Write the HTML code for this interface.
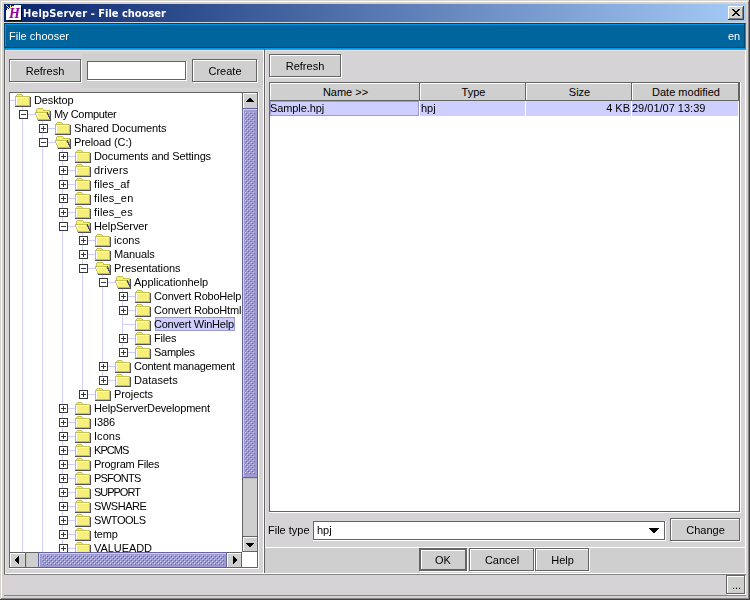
<!DOCTYPE html>
<html><head><meta charset="utf-8"><title>HelpServer - File chooser</title>
<style>
*{margin:0;padding:0;box-sizing:border-box}
html,body{width:750px;height:600px;overflow:hidden;background:#d6d3ce}
body{position:relative;font-family:"Liberation Sans",Arial,sans-serif;font-size:11px;color:#000;line-height:14px;letter-spacing:0}
.a,i,span,svg{position:absolute;display:block}
span,.btn b,.th b{will-change:transform}
/* window frame */
#f1{left:0;top:0;width:750px;height:600px;background:#424142}
#f2{left:0;top:0;width:749px;height:599px;background:#d6d3ce}
#f3{left:1px;top:1px;width:748px;height:598px;background:#848284}
#f4{left:1px;top:1px;width:747px;height:597px;background:#fff}
#f5{left:2px;top:2px;width:746px;height:596px;background:#d6d3ce}
#title{left:4px;top:4px;width:742px;height:18px;background:linear-gradient(90deg,#08246b 0%,#a5cbf7 100%)}
#ttext{left:19px;top:1px;height:18px;line-height:18px;letter-spacing:0;font-family:"DejaVu Sans Condensed","DejaVu Sans",sans-serif;font-weight:bold;font-size:11px;color:#fff;white-space:nowrap}
#close{left:724px;top:2px;width:16px;height:14px;background:#d6d3ce;box-shadow:inset -1px -1px 0 #424142,inset 1px 1px 0 #fff,inset -2px -2px 0 #848284}
/* header */
#hdr{left:4px;top:23px;width:742px;height:26px;background:#00659c}
#hdr:before{content:"";position:absolute;left:1px;top:1px;right:0;bottom:0;border:1px solid #0096e7}
#hdr:after{content:"";position:absolute;left:0;top:0;right:1px;bottom:1px;border:1px solid #00456b}
#hdr span{color:#fff;top:6px;white-space:nowrap}
/* content */
#content{left:4px;top:49px;width:742px;height:547px;background:#d6d3d6}
.btn{background:#cecfce;text-align:center;white-space:nowrap}
.btn:before{content:"";position:absolute;left:1px;top:1px;right:0;bottom:0;border:1px solid #fff}
.btn:after{content:"";position:absolute;left:0;top:0;right:1px;bottom:1px;border:1px solid #636563}
.btn b{font-weight:normal;position:relative;z-index:2}
.fld{background:#fff}
.fld:before{content:"";position:absolute;left:1px;top:1px;right:0;bottom:0;border:1px solid #fff}
.fld:after{content:"";position:absolute;left:0;top:0;right:1px;bottom:1px;border:1px solid #636563}
.hl{height:1px;background:#cecfff}
.vl{width:1px;background:#cecfff}
.bx{width:9px;height:9px;border:1px solid #393839;background:#fff}
.bx:before{content:"";position:absolute;left:1px;top:3px;width:5px;height:1px;background:#393839}
.bp:after{content:"";position:absolute;left:3px;top:1px;width:1px;height:5px;background:#393839}
.tl{height:14px;line-height:14px;white-space:nowrap}
.sel{background:#cecfff;border:1px solid #9c9ace}
svg{shape-rendering:crispEdges}
#tree{left:10px;top:93px;width:232px;height:459px;background:#fff;overflow:hidden}
.dk{background:#636563}
.wh{background:#fff}
.fc{background:#cecfce}
.th{top:83px;height:17px;line-height:18px;text-align:center;padding-left:2px;border-right:1px solid #636563;box-shadow:inset 1px 1px 0 #fff}
.th b{font-weight:normal}
.sb{box-shadow:inset 1px 1px 0 #fff}
</style></head><body>
<svg width="0" height="0" style="position:absolute">
<defs>
<pattern id="bump" width="4" height="4" patternUnits="userSpaceOnUse">
<rect x="0" y="0" width="1" height="1" fill="#cecfff"/><rect x="2" y="2" width="1" height="1" fill="#cecfff"/>
<rect x="1" y="1" width="1" height="1" fill="#63659c"/><rect x="3" y="3" width="1" height="1" fill="#63659c"/>
</pattern>
<symbol id="fc" viewBox="0 0 16 13">
<rect x="2" y="0" width="5" height="1" fill="#c6c34a"/>
<rect x="1" y="1" width="7" height="1" fill="#c6c34a"/>
<rect x="2" y="1" width="5" height="1" fill="#f7ef7b"/>
<rect x="0" y="2" width="15" height="10" fill="#c6c34a"/>
<rect x="1" y="3" width="13" height="8" fill="#fff"/>
<rect x="2" y="4" width="12" height="7" fill="#f7ef7b"/>
<rect x="15" y="3" width="1" height="10" fill="#52515a"/>
<rect x="0" y="12" width="16" height="1" fill="#52515a"/>
</symbol>
<symbol id="fo" viewBox="0 0 16 13">
<rect x="2" y="0" width="6" height="1" fill="#c6c34a"/>
<rect x="1" y="1" width="8" height="3" fill="#c6c34a"/>
<rect x="2" y="1" width="6" height="3" fill="#f7ef7b"/>
<rect x="8" y="2" width="7" height="10" fill="#c6c34a"/>
<rect x="2" y="3" width="12" height="2" fill="#f7ef7b"/>
<rect x="0" y="4" width="12" height="3" fill="#c6c34a"/>
<rect x="1" y="5" width="10" height="1" fill="#fff"/>
<rect x="1" y="6" width="1" height="1" fill="#fff"/>
<rect x="2" y="6" width="10" height="1" fill="#f7ef7b"/>
<rect x="1" y="7" width="13" height="2" fill="#c6c34a"/>
<rect x="2" y="7" width="1" height="2" fill="#fff"/>
<rect x="3" y="7" width="10" height="2" fill="#f7ef7b"/>
<rect x="2" y="9" width="13" height="3" fill="#c6c34a"/>
<rect x="3" y="9" width="1" height="1" fill="#fff"/>
<rect x="4" y="9" width="10" height="2" fill="#f7ef7b"/>
<rect x="3" y="10" width="1" height="1" fill="#f7ef7b"/>
<rect x="12" y="4" width="1" height="3" fill="#52516b"/>
<rect x="13" y="6" width="1" height="3" fill="#52516b"/>
<rect x="14" y="8" width="1" height="3" fill="#52516b"/>
<rect x="15" y="3" width="1" height="10" fill="#52515a"/>
<rect x="3" y="12" width="13" height="1" fill="#52515a"/>
</symbol>
</defs></svg>

<div class="a" id="f1"></div><div class="a" id="f2"></div><div class="a" id="f3"></div><div class="a" id="f4"></div><div class="a" id="f5"></div>
<div class="a" id="title">
  <div class="a" style="left:2px;top:1px;width:15px;height:15px;background:#fff"></div>
  <div class="a" style="left:17px;top:3px;width:1px;height:14px;background:#000"></div>
  <div class="a" style="left:4px;top:16px;width:13px;height:1px;background:#000"></div>
  <svg style="left:2px;top:1px" width="15" height="15"><path d="M0 0h8v1h-2v1h-2v1h-1v1h-2v1h-1z" fill="#08246b"/><path d="M0 0h1v1h-1zM1 1h1v1h-1zM2 2h1v1h-1zM3 3h1v1h-1zM4 4h1v1h-1zM5 6h1v1h-1zM4 0h1v3h-1zM7 1h1v1h-1zM6 2h1v1h-1zM5 3h1v1h-1zM1 3h1v1h-1zM3 5h1v1h-1z" fill="#ffff00"/></svg>
  <span style="left:5px;top:2px;width:14px;height:15px;line-height:15px;font-family:'Liberation Serif',serif;font-style:italic;font-weight:bold;font-size:14px;color:#9c009c;letter-spacing:0">H</span>
  <span id="ttext"><b style="letter-spacing:0.2px">HelpServer</b> - File chooser</span>
  <div class="a" id="close"><svg width="16" height="14" style="left:0;top:0"><path d="M4 3h2v1h-2zM10 3h2v1h-2zM5 4h2v1h-2zM9 4h2v1h-2zM6 5h4v1h-4zM7 6h2v1h-2zM6 7h4v1h-4zM5 8h2v1h-2zM9 8h2v1h-2zM4 9h2v1h-2zM10 9h2v1h-2z" fill="#000"/></svg></div>
</div>
<div class="a" id="hdr"><span style="left:5px">File chooser</span><span style="right:6px">en</span></div>
<div class="a" id="content"></div>

<!-- panel borders -->
<div class="a" style="left:4px;top:49px;width:742px;height:1px;background:#848284"></div>
<div class="a" style="left:5px;top:50px;width:740px;height:1px;background:#e7e3e7"></div>
<div class="a" style="left:4px;top:49px;width:1px;height:526px;background:#636563"></div>
<div class="a" style="left:5px;top:50px;width:1px;height:523px;background:#e7e3e7"></div>
<div class="a wh" style="left:263px;top:50px;width:1px;height:524px"></div>
<div class="a dk" style="left:264px;top:49px;width:1px;height:526px"></div>
<div class="a" style="left:265px;top:50px;width:1px;height:523px;background:#e7e3e7"></div>
<div class="a wh" style="left:745px;top:50px;width:1px;height:545px"></div>

<!-- left toolbar -->
<div class="a fc" style="left:82px;top:54px;width:181px;height:34px"></div>
<div class="a btn" style="left:9px;top:59px;width:73px;height:24px;line-height:25px"><b style="left:-0.5px">Refresh</b></div>
<div class="a fld" style="left:87px;top:61px;width:100px;height:20px"></div>
<div class="a btn" style="left:192px;top:59px;width:66px;height:24px;line-height:25px"><b>Create</b></div>

<!-- tree scrollpane -->
<div class="a fld" style="left:9px;top:92px;width:250px;height:477px"></div>
<div class="a" id="tree">
<i class="hl" style="left:0;top:7px;width:5px"></i>
<i class="vl" style="left:12px;top:14px;height:457px"></i>
<i class="hl" style="left:18px;top:21px;width:7px"></i>
<i class="vl" style="left:32px;top:28px;height:443px"></i>
<i class="hl" style="left:38px;top:35px;width:7px"></i>
<i class="hl" style="left:38px;top:49px;width:7px"></i>
<i class="vl" style="left:52px;top:56px;height:415px"></i>
<i class="hl" style="left:58px;top:63px;width:7px"></i>
<i class="hl" style="left:58px;top:77px;width:7px"></i>
<i class="hl" style="left:58px;top:91px;width:7px"></i>
<i class="hl" style="left:58px;top:105px;width:7px"></i>
<i class="hl" style="left:58px;top:119px;width:7px"></i>
<i class="hl" style="left:58px;top:133px;width:7px"></i>
<i class="vl" style="left:72px;top:140px;height:162px"></i>
<i class="hl" style="left:78px;top:147px;width:7px"></i>
<i class="hl" style="left:78px;top:161px;width:7px"></i>
<i class="hl" style="left:78px;top:175px;width:7px"></i>
<i class="vl" style="left:92px;top:182px;height:106px"></i>
<i class="hl" style="left:98px;top:189px;width:7px"></i>
<i class="vl" style="left:112px;top:196px;height:64px"></i>
<i class="hl" style="left:118px;top:203px;width:7px"></i>
<i class="hl" style="left:118px;top:217px;width:7px"></i>
<i class="hl" style="left:113px;top:231px;width:12px"></i>
<i class="hl" style="left:118px;top:245px;width:7px"></i>
<i class="hl" style="left:118px;top:259px;width:7px"></i>
<i class="hl" style="left:98px;top:273px;width:7px"></i>
<i class="hl" style="left:98px;top:287px;width:7px"></i>
<i class="hl" style="left:78px;top:301px;width:7px"></i>
<i class="hl" style="left:58px;top:315px;width:7px"></i>
<i class="hl" style="left:58px;top:329px;width:7px"></i>
<i class="hl" style="left:58px;top:343px;width:7px"></i>
<i class="hl" style="left:58px;top:357px;width:7px"></i>
<i class="hl" style="left:58px;top:371px;width:7px"></i>
<i class="hl" style="left:58px;top:385px;width:7px"></i>
<i class="hl" style="left:58px;top:399px;width:7px"></i>
<i class="hl" style="left:58px;top:413px;width:7px"></i>
<i class="hl" style="left:58px;top:427px;width:7px"></i>
<i class="hl" style="left:58px;top:441px;width:7px"></i>
<i class="hl" style="left:58px;top:455px;width:7px"></i>
<svg class="ic" style="left:5px;top:1px" width="16" height="13"><use href="#fc"/></svg>
<span class="tl" style="left:24.3px;top:0px;letter-spacing:-0.12px">Desktop</span>
<i class="bx bm" style="left:9px;top:17px"></i>
<svg class="ic" style="left:25px;top:15px" width="16" height="13"><use href="#fo"/></svg>
<span class="tl" style="left:44.3px;top:14px;letter-spacing:-0.33px">My Computer</span>
<i class="bx bp" style="left:29px;top:31px"></i>
<svg class="ic" style="left:45px;top:29px" width="16" height="13"><use href="#fc"/></svg>
<span class="tl" style="left:64.3px;top:28px;letter-spacing:-0.11px">Shared Documents</span>
<i class="bx bm" style="left:29px;top:45px"></i>
<svg class="ic" style="left:45px;top:43px" width="16" height="13"><use href="#fo"/></svg>
<span class="tl" style="left:64.3px;top:42px;letter-spacing:-0.12px">Preload (C:)</span>
<i class="bx bp" style="left:49px;top:59px"></i>
<svg class="ic" style="left:65px;top:57px" width="16" height="13"><use href="#fc"/></svg>
<span class="tl" style="left:84.3px;top:56px;letter-spacing:-0.13px">Documents and Settings</span>
<i class="bx bp" style="left:49px;top:73px"></i>
<svg class="ic" style="left:65px;top:71px" width="16" height="13"><use href="#fc"/></svg>
<span class="tl" style="left:84.3px;top:70px;letter-spacing:0.22px">drivers</span>
<i class="bx bp" style="left:49px;top:87px"></i>
<svg class="ic" style="left:65px;top:85px" width="16" height="13"><use href="#fc"/></svg>
<span class="tl" style="left:84.3px;top:84px;letter-spacing:0.10px">files_af</span>
<i class="bx bp" style="left:49px;top:101px"></i>
<svg class="ic" style="left:65px;top:99px" width="16" height="13"><use href="#fc"/></svg>
<span class="tl" style="left:84.3px;top:98px;letter-spacing:0.19px">files_en</span>
<i class="bx bp" style="left:49px;top:115px"></i>
<svg class="ic" style="left:65px;top:113px" width="16" height="13"><use href="#fc"/></svg>
<span class="tl" style="left:84.3px;top:112px;letter-spacing:0.19px">files_es</span>
<i class="bx bm" style="left:49px;top:129px"></i>
<svg class="ic" style="left:65px;top:127px" width="16" height="13"><use href="#fo"/></svg>
<span class="tl" style="left:84.3px;top:126px;letter-spacing:-0.12px">HelpServer</span>
<i class="bx bp" style="left:69px;top:143px"></i>
<svg class="ic" style="left:85px;top:141px" width="16" height="13"><use href="#fc"/></svg>
<span class="tl" style="left:104.3px;top:140px;letter-spacing:0.10px">icons</span>
<i class="bx bp" style="left:69px;top:157px"></i>
<svg class="ic" style="left:85px;top:155px" width="16" height="13"><use href="#fc"/></svg>
<span class="tl" style="left:104.3px;top:154px;letter-spacing:-0.12px">Manuals</span>
<i class="bx bm" style="left:69px;top:171px"></i>
<svg class="ic" style="left:85px;top:169px" width="16" height="13"><use href="#fo"/></svg>
<span class="tl" style="left:104.3px;top:168px;letter-spacing:-0.06px">Presentations</span>
<i class="bx bm" style="left:89px;top:185px"></i>
<svg class="ic" style="left:105px;top:183px" width="16" height="13"><use href="#fo"/></svg>
<span class="tl" style="left:124.3px;top:182px;letter-spacing:-0.03px">Applicationhelp</span>
<i class="bx bp" style="left:109px;top:199px"></i>
<svg class="ic" style="left:125px;top:197px" width="16" height="13"><use href="#fc"/></svg>
<span class="tl" style="left:144.3px;top:196px;letter-spacing:-0.21px">Convert RoboHelp</span>
<i class="bx bp" style="left:109px;top:213px"></i>
<svg class="ic" style="left:125px;top:211px" width="16" height="13"><use href="#fc"/></svg>
<span class="tl" style="left:144.3px;top:210px;letter-spacing:-0.21px">Convert RoboHtml</span>
<svg class="ic" style="left:125px;top:225px" width="16" height="13"><use href="#fc"/></svg>
<i class="sel" style="left:145px;top:224px;width:80px;height:14px"></i>
<span class="tl" style="left:144.3px;top:224px;letter-spacing:-0.22px">Convert WinHelp</span>
<i class="bx bp" style="left:109px;top:241px"></i>
<svg class="ic" style="left:125px;top:239px" width="16" height="13"><use href="#fc"/></svg>
<span class="tl" style="left:144.3px;top:238px;letter-spacing:-0.17px">Files</span>
<i class="bx bp" style="left:109px;top:255px"></i>
<svg class="ic" style="left:125px;top:253px" width="16" height="13"><use href="#fc"/></svg>
<span class="tl" style="left:144.3px;top:252px;letter-spacing:-0.28px">Samples</span>
<i class="bx bp" style="left:89px;top:269px"></i>
<svg class="ic" style="left:105px;top:267px" width="16" height="13"><use href="#fc"/></svg>
<span class="tl" style="left:124.3px;top:266px;letter-spacing:-0.28px">Content management</span>
<i class="bx bp" style="left:89px;top:283px"></i>
<svg class="ic" style="left:105px;top:281px" width="16" height="13"><use href="#fc"/></svg>
<span class="tl" style="left:124.3px;top:280px;letter-spacing:0.04px">Datasets</span>
<i class="bx bp" style="left:69px;top:297px"></i>
<svg class="ic" style="left:85px;top:295px" width="16" height="13"><use href="#fc"/></svg>
<span class="tl" style="left:104.3px;top:294px;letter-spacing:-0.10px">Projects</span>
<i class="bx bp" style="left:49px;top:311px"></i>
<svg class="ic" style="left:65px;top:309px" width="16" height="13"><use href="#fc"/></svg>
<span class="tl" style="left:84.3px;top:308px;letter-spacing:-0.19px">HelpServerDevelopment</span>
<i class="bx bp" style="left:49px;top:325px"></i>
<svg class="ic" style="left:65px;top:323px" width="16" height="13"><use href="#fc"/></svg>
<span class="tl" style="left:84.3px;top:322px;letter-spacing:-0.07px">I386</span>
<i class="bx bp" style="left:49px;top:339px"></i>
<svg class="ic" style="left:65px;top:337px" width="16" height="13"><use href="#fc"/></svg>
<span class="tl" style="left:84.3px;top:336px;letter-spacing:0.05px">Icons</span>
<i class="bx bp" style="left:49px;top:353px"></i>
<svg class="ic" style="left:65px;top:351px" width="16" height="13"><use href="#fc"/></svg>
<span class="tl" style="left:84.3px;top:350px;letter-spacing:-0.95px">KPCMS</span>
<i class="bx bp" style="left:49px;top:367px"></i>
<svg class="ic" style="left:65px;top:365px" width="16" height="13"><use href="#fc"/></svg>
<span class="tl" style="left:84.3px;top:364px;letter-spacing:-0.25px">Program Files</span>
<i class="bx bp" style="left:49px;top:381px"></i>
<svg class="ic" style="left:65px;top:379px" width="16" height="13"><use href="#fc"/></svg>
<span class="tl" style="left:84.3px;top:378px;letter-spacing:-0.78px">PSFONTS</span>
<i class="bx bp" style="left:49px;top:395px"></i>
<svg class="ic" style="left:65px;top:393px" width="16" height="13"><use href="#fc"/></svg>
<span class="tl" style="left:84.3px;top:392px;letter-spacing:-1.02px">SUPPORT</span>
<i class="bx bp" style="left:49px;top:409px"></i>
<svg class="ic" style="left:65px;top:407px" width="16" height="13"><use href="#fc"/></svg>
<span class="tl" style="left:84.3px;top:406px;letter-spacing:-0.45px">SWSHARE</span>
<i class="bx bp" style="left:49px;top:423px"></i>
<svg class="ic" style="left:65px;top:421px" width="16" height="13"><use href="#fc"/></svg>
<span class="tl" style="left:84.3px;top:420px;letter-spacing:-0.45px">SWTOOLS</span>
<i class="bx bp" style="left:49px;top:437px"></i>
<svg class="ic" style="left:65px;top:435px" width="16" height="13"><use href="#fc"/></svg>
<span class="tl" style="left:84.3px;top:434px;letter-spacing:-0.23px">temp</span>
<i class="bx bp" style="left:49px;top:451px"></i>
<svg class="ic" style="left:65px;top:449px" width="16" height="13"><use href="#fc"/></svg>
<span class="tl" style="left:84.3px;top:448px;letter-spacing:-0.07px">VALUEADD</span>
</div>
<!-- vertical scrollbar x=242..256 y=93..551 -->
<div class="a fc" style="left:242px;top:93px;width:15px;height:459px"></div>
<div class="a dk" style="left:242px;top:93px;width:1px;height:459px"></div>
<div class="a sb" style="left:243px;top:93px;width:14px;height:15px"></div>
<svg style="left:246px;top:98px" width="8" height="4"><path d="M3 0h2v1h-2zM2 1h4v1h-4zM1 2h6v1h-6zM0 3h8v1h-8z"/></svg>
<div class="a" style="left:242px;top:108px;width:15px;height:370px;background:#9c9ace;border:1px solid #63659c;border-right:0;box-shadow:inset 1px 1px 0 #cecfff"></div>
<svg style="left:245px;top:112px" width="10" height="362"><rect width="10" height="362" fill="url(#bump)"/></svg>
<div class="a" style="left:243px;top:478px;width:14px;height:1px;background:#bdbebd"></div>
<div class="a dk" style="left:242px;top:536px;width:15px;height:1px"></div>
<div class="a sb" style="left:243px;top:537px;width:14px;height:14px"></div>
<svg style="left:246px;top:543px" width="8" height="4"><path d="M0 0h8v1h-8zM1 1h6v1h-6zM2 2h4v1h-4zM3 3h2v1h-2z"/></svg>
<div class="a dk" style="left:242px;top:551px;width:15px;height:1px"></div>
<!-- horizontal scrollbar y=552..566 x=10..241 -->
<div class="a fc" style="left:10px;top:552px;width:232px;height:15px"></div>
<div class="a dk" style="left:10px;top:552px;width:232px;height:1px"></div>
<div class="a sb" style="left:10px;top:553px;width:15px;height:14px"></div>
<div class="a dk" style="left:25px;top:553px;width:1px;height:14px"></div>
<svg style="left:15px;top:556px" width="4" height="8"><path d="M3 0h1v8h-1zM2 1h1v6h-1zM1 2h1v4h-1zM0 3h1v2h-1z"/></svg>
<div class="a" style="left:26px;top:553px;width:1px;height:14px;background:#bdbebd"></div>
<div class="a" style="left:38px;top:552px;width:189px;height:15px;background:#9c9ace;border:1px solid #63659c;border-bottom:0;box-shadow:inset 1px 1px 0 #cecfff"></div>
<svg style="left:42px;top:555px" width="182" height="10"><rect width="182" height="10" fill="url(#bump)"/></svg>
<div class="a sb" style="left:227px;top:553px;width:14px;height:14px"></div>
<div class="a dk" style="left:241px;top:553px;width:1px;height:14px"></div>
<svg style="left:233px;top:556px" width="4" height="8"><path d="M0 0h1v8h-1zM1 1h1v6h-1zM2 2h1v4h-1zM3 3h1v2h-1z"/></svg>
<div class="a wh" style="left:242px;top:552px;width:15px;height:15px"></div>

<!-- right panel -->
<div class="a btn" style="left:269px;top:54px;width:73px;height:24px;line-height:25px"><b style="left:-0.5px">Refresh</b></div>
<div class="a fld" style="left:269px;top:82px;width:472px;height:431px"></div>
<!-- table header -->
<div class="a fc" style="left:270px;top:83px;width:469px;height:17px"></div>
<div class="a dk" style="left:270px;top:100px;width:469px;height:1px"></div>
<div class="a th" style="left:270px;width:150px"><b>Name &gt;&gt;</b></div>
<div class="a th" style="left:420px;width:106px"><b>Type</b></div>
<div class="a th" style="left:526px;width:106px"><b>Size</b></div>
<div class="a th" style="left:632px;width:107px"><b>Date modified</b></div>
<!-- row -->
<div class="a" style="left:270px;top:101px;width:149px;height:15px;background:#cecfff;border:1px solid #9c9ace"></div>
<div class="a" style="left:420px;top:101px;width:105px;height:15px;background:#cecfff"></div>
<div class="a" style="left:526px;top:101px;width:105px;height:15px;background:#cecfff"></div>
<div class="a" style="left:632px;top:101px;width:106px;height:15px;background:#cecfff"></div>
<span style="left:270px;top:101px;white-space:nowrap;letter-spacing:-0.1px">Sample.hpj</span>
<span style="left:421px;top:101px">hpj</span>
<span style="left:526px;top:101px;width:104px;text-align:right">4 KB</span>
<span style="left:632px;top:101px;white-space:nowrap">29/01/07 13:39</span>

<span style="left:268px;top:523px;white-space:nowrap">File type</span>
<div class="a fld" style="left:313px;top:521px;width:353px;height:20px"></div>
<span style="left:317px;top:523px">hpj</span>
<svg style="left:649px;top:528px" width="10" height="5"><path d="M0 0h10v1h-10zM1 1h8v1h-8zM2 2h6v1h-6zM3 3h4v1h-4zM4 4h2v1h-2z"/></svg>
<div class="a btn" style="left:670px;top:518px;width:71px;height:24px;line-height:25px"><b>Change</b></div>

<!-- button row -->
<div class="a wh" style="left:265px;top:547px;width:480px;height:1px"></div>
<div class="a fc" style="left:265px;top:548px;width:480px;height:25px"></div>
<div class="a" style="left:420px;top:549px;width:48px;height:23px;border:1px solid #fff"></div>
<div class="a btn" style="left:420px;top:549px;width:47px;height:22px;line-height:23px"><b style="left:-0.5px">OK</b></div>
<div class="a" style="left:419px;top:548px;width:48px;height:23px;border:1px solid #636563"></div>
<div class="a btn" style="left:469px;top:548px;width:66px;height:24px;line-height:25px"><b>Cancel</b></div>
<div class="a btn" style="left:535px;top:548px;width:55px;height:24px;line-height:25px"><b>Help</b></div>

<!-- bottom lines -->
<div class="a wh" style="left:5px;top:573px;width:741px;height:1px"></div>
<div class="a" style="left:4px;top:574px;width:742px;height:1px;background:#848284"></div>
<!-- status bar -->
<div class="a" style="left:4px;top:595px;width:742px;height:1px;background:#848284"></div>
<div class="a btn" style="left:726px;top:575px;width:20px;height:20px;line-height:20px;text-align:left"><b style="left:6px;letter-spacing:-0.06px">...</b></div>
</body></html>
